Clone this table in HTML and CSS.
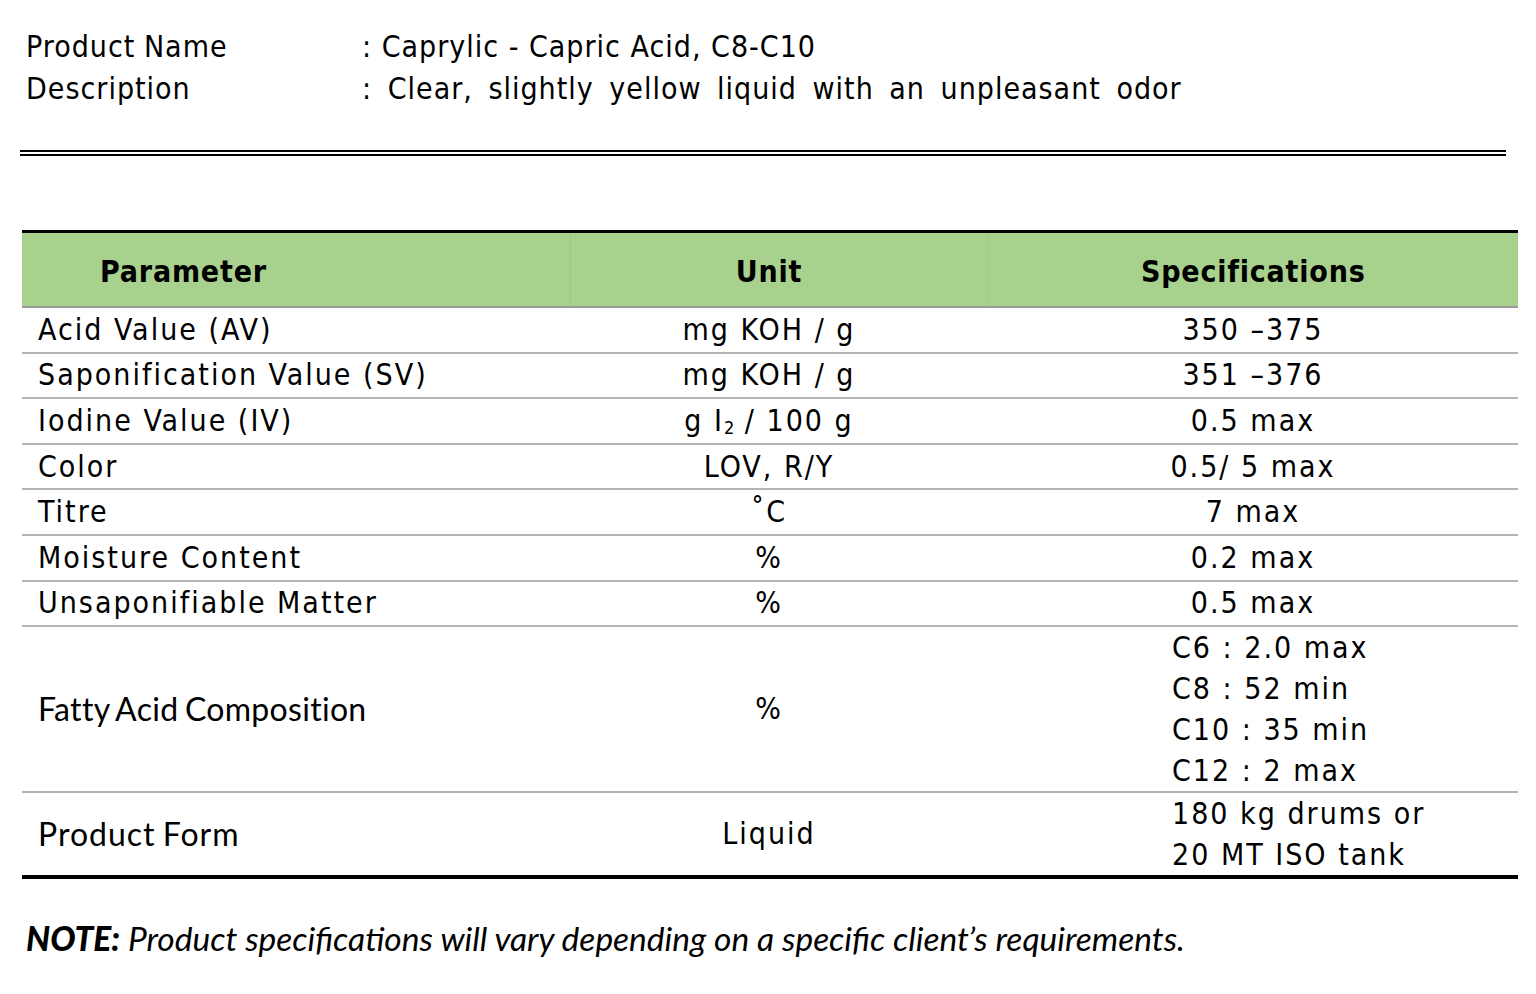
FILE: index.html
```html
<!DOCTYPE html>
<html>
<head>
<meta charset="utf-8">
<link rel="stylesheet" href="styles.css">
</head>
<body>
<div class="page">
  <div class="info">
    <div class="info-row"><span class="label tight">Product Name</span><span class="value">: Caprylic - Capric Acid, C8-C10</span></div>
    <div class="info-row"><span class="label">Description</span><span class="value wide">: Clear, slightly yellow liquid with an unpleasant odor</span></div>
  </div>
  <div class="double-rule"></div>
  <table class="spec">
    <colgroup><col class="c1"><col class="c2"><col class="c3"></colgroup>
    <thead>
      <tr><th class="h-param">Parameter</th><th class="h-unit">Unit</th><th>Specifications</th></tr>
    </thead>
    <tbody>
      <tr><td class="p">Acid Value (AV)</td><td class="u">mg KOH / g</td><td class="s">350 –375</td></tr>
      <tr><td class="p">Saponification Value (SV)</td><td class="u">mg KOH / g</td><td class="s">351 –376</td></tr>
      <tr><td class="p">Iodine Value (IV)</td><td class="u">g I<sub>2</sub> / 100 g</td><td class="s">0.5 max</td></tr>
      <tr><td class="p">Color</td><td class="u">LOV, R/Y</td><td class="s">0.5/ 5 max</td></tr>
      <tr><td class="p">Titre</td><td class="u">˚C</td><td class="s">7 max</td></tr>
      <tr><td class="p">Moisture Content</td><td class="u">%</td><td class="s">0.2 max</td></tr>
      <tr><td class="p">Unsaponifiable Matter</td><td class="u">%</td><td class="s">0.5 max</td></tr>
      <tr class="tall"><td class="p alt">Fatty Acid Composition</td><td class="u">%</td><td class="s list"><div>C6 : 2.0 max</div><div>C8 : 52 min</div><div>C10 : 35 min</div><div>C12 : 2 max</div></td></tr>
      <tr class="last"><td class="p alt pf">Product Form</td><td class="u">Liquid</td><td class="s list"><div>180 kg drums or</div><div>20 MT ISO tank</div></td></tr>
    </tbody>
  </table>
  <p class="note"><b>NOTE:</b> Product specifications will vary depending on a specific client’s requirements.</p>
</div>
</body>
</html>
```

FILE: styles.css
```css
html, body {
  margin: 0;
  padding: 0;
  background: #fff;
}
.page {
  width: 1536px;
  height: 994px;
  font-family: "DejaVu Sans Condensed", "DejaVu Sans", sans-serif;
  font-stretch: condensed;
  color: #000;
  overflow: hidden;
}
.info {
  padding: 26px 0 0 26px;
  font-size: 30px;
  line-height: 42px;
  letter-spacing: 1px;
}
.info-row {
  display: flex;
}
.label {
  width: 336px;
}
.label.tight {
  word-spacing: -1px;
}
.value {
  word-spacing: 0;
}
.value.wide {
  word-spacing: 6px;
}
.double-rule {
  margin: 40px 0 0 20px;
  width: 1486px;
  border-top: 6px double #000;
}
.spec {
  margin: 74px 0 0 22px;
  width: 1496px;
  border-collapse: collapse;
  table-layout: fixed;
  font-size: 30px;
}
.c1 { width: 548px; }
.c2 { width: 418px; }
.c3 { width: 530px; }
.spec thead tr {
  border-top: 3px solid #000;
}
.spec th {
  background: #a9d18e;
  height: 70px;
  padding: 3px 0 0 0;
  font-weight: bold;
  letter-spacing: 0.8px;
  text-align: center;
  border-left: 1px solid #a0c986;
  border-bottom: 2px solid #9a9a9a;
}
.spec th:first-child {
  border-left: none;
}
.spec th.h-param {
  text-align: left;
  padding-left: 78px;
}
.spec th.h-unit {
  padding-right: 20px;
}
.spec td {
  height: 43.6px;
  padding: 0;
  border-bottom: 2px solid #b4b4b4;
  line-height: 40px;
  letter-spacing: 2px;
  vertical-align: middle;
}
.spec td.p {
  padding-left: 16px;
}
.spec td.alt {
  font-family: Lato, sans-serif;
  font-stretch: normal;
  font-size: 32px;
  letter-spacing: 0.3px;
  word-spacing: -2px;
}
.spec td.alt.pf {
  letter-spacing: 1px;
}
.spec td.u {
  text-align: center;
  padding-right: 20px;
}
.spec td.s {
  text-align: center;
}
.spec td.s.list {
  text-align: left;
  padding-left: 184px;
  line-height: 41px;
}
.spec tr.tall td {
  height: 162px;
}
.spec tr.last td {
  height: 82px;
  border-bottom: 4px solid #000;
}
.spec sub {
  font-size: 60%;
  vertical-align: -3px;
  line-height: 0;
  letter-spacing: 0;
}
.note {
  margin: 39px 0 0 26px;
  font-family: Lato, sans-serif;
  font-style: italic;
  font-size: 33.5px;
}
.note b {
  font-weight: 900;
}
```
